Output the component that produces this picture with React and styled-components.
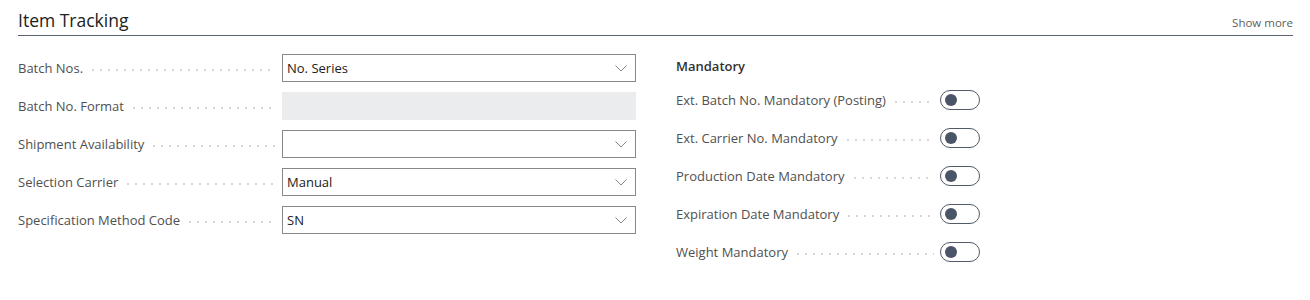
import React from "react";
import styled, { createGlobalStyle } from "styled-components";

const GlobalStyle = createGlobalStyle`
  body {
    margin: 0;
    background: #ffffff;
    font-family: "Open Sans", "Noto Sans", "Liberation Sans", sans-serif;
  }
`;

const leftFields = [
  { label: "Batch Nos.", value: "No. Series", kind: "select" },
  { label: "Batch No. Format", value: "", kind: "disabled" },
  { label: "Shipment Availability", value: "", kind: "select" },
  { label: "Selection Carrier", value: "Manual", kind: "select" },
  { label: "Specification Method Code", value: "SN", kind: "select" },
];

const toggles = [
  "Ext. Batch No. Mandatory (Posting)",
  "Ext. Carrier No. Mandatory",
  "Production Date Mandatory",
  "Expiration Date Mandatory",
  "Weight Mandatory",
];

const Chevron = () => (
  <svg width="12" height="7" viewBox="0 0 12 7" fill="none">
    <path d="M0.5 0.5 L6 6 L11.5 0.5" stroke="#8a8886" strokeWidth="1" />
  </svg>
);

const App = () => {
  return (
    <Wrapper>
      <GlobalStyle />
      <Header>
        <Title>Item Tracking</Title>
        <ShowMore>Show more</ShowMore>
      </Header>
      <Columns>
        <Column>
          {leftFields.map((f) => (
            <Row key={f.label}>
              <Label>
                <span>{f.label}</span>
                <Leader />
              </Label>
              <Control $disabled={f.kind === "disabled"}>
                <Value>{f.value}</Value>
                {f.kind === "select" && <Chevron />}
              </Control>
            </Row>
          ))}
        </Column>
        <Column>
          <GroupTitle>Mandatory</GroupTitle>
          {toggles.map((t) => (
            <Row key={t}>
              <Label>
                <span>{t}</span>
                <Leader />
              </Label>
              <Switch>
                <Knob />
              </Switch>
            </Row>
          ))}
        </Column>
      </Columns>
    </Wrapper>
  );
};

const Wrapper = styled.div`
  padding: 0 17px 0 18px;
  color: #505050;
`;

const Header = styled.div`
  display: flex;
  align-items: flex-end;
  justify-content: space-between;
  height: 35px;
  border-bottom: 1px solid #5c6370;
`;

const Title = styled.h2`
  margin: 0 0 3px;
  font-size: 17.5px;
  font-weight: 400;
  color: #212121;
  line-height: 24px;
`;

const ShowMore = styled.span`
  font-size: 11.5px;
  color: #605e5c;
  margin-bottom: 4px;
  line-height: 16px;
`;

const Columns = styled.div`
  display: grid;
  grid-template-columns: 618px 618px;
  column-gap: 40px;
  padding-top: 18px;
`;

const Column = styled.div`
  display: flex;
  flex-direction: column;
  gap: 10px;
`;

const GroupTitle = styled.div`
  height: 28px;
  line-height: 25px;
  margin-bottom: -6px;
  font-size: 13px;
  font-weight: 600;
  color: #323130;
`;

const Row = styled.div`
  display: flex;
  align-items: center;
  height: 28px;
`;

const Label = styled.div`
  display: flex;
  align-items: center;
  width: 258px;
  margin-right: 6px;
  font-size: 13px;
  white-space: nowrap;
`;

const Leader = styled.span`
  flex: 1;
  height: 2px;
  margin: 3px 0 0 9px;
  background: repeating-linear-gradient(
    to right,
    #d6d6d6 0 2px,
    transparent 2px 8px
  );
`;

const Control = styled.div`
  box-sizing: border-box;
  width: 354px;
  height: 28px;
  display: flex;
  align-items: center;
  justify-content: space-between;
  padding: 0 8px 0 4px;
  border: 1px solid ${(p) => (p.$disabled ? "#ebecee" : "#8a8886")};
  background: ${(p) => (p.$disabled ? "#ebecee" : "#ffffff")};
`;

const Value = styled.span`
  font-size: 13px;
  color: #212121;
`;

const Switch = styled.div`
  box-sizing: border-box;
  width: 40px;
  height: 20px;
  border: 1px solid #505a68;
  border-radius: 10px;
  display: flex;
  align-items: center;
  padding-left: 4px;
`;

const Knob = styled.span`
  width: 12px;
  height: 12px;
  border-radius: 50%;
  background: #4a5568;
`;

export default App;
